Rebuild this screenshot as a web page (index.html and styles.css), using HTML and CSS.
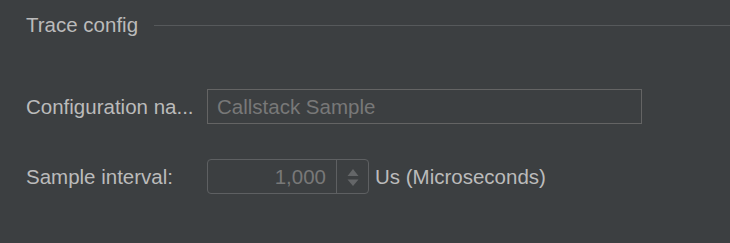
FILE: index.html
```html
<!DOCTYPE html>
<html>
<head>
<meta charset="utf-8">
<link rel="stylesheet" href="styles.css">
</head>
<body>
<div class="panel">
  <div class="title-row">
    <span class="title">Trace config</span>
    <div class="rule"></div>
  </div>
  <div class="form">
    <div class="row">
      <label class="label">Configuration na...</label>
      <div class="textfield">Callstack Sample</div>
    </div>
    <div class="row">
      <label class="label">Sample interval:</label>
      <div class="spinner">
        <div class="spin-value">1,000</div>
        <div class="spin-btns">
          <svg width="12" height="18" viewBox="0 0 12 18">
            <polygon points="6,0 11.5,7 0.5,7" fill="#646668"/>
            <polygon points="0.5,10.5 11.5,10.5 6,17" fill="#646668"/>
          </svg>
        </div>
      </div>
      <span class="unit">Us (Microseconds)</span>
    </div>
  </div>
</div>
</body>
</html>
```

FILE: styles.css
```css
html, body {
  margin: 0;
  padding: 0;
  background: #3c3f41;
}
body {
  width: 730px;
  height: 243px;
  overflow: hidden;
  font-family: "Liberation Sans", Arial, sans-serif;
  font-size: 20.5px;
  color: #bbbbbb;
}
.panel {
  padding: 13px 0 0 26px;
}
.title-row {
  display: flex;
  align-items: flex-start;
  height: 24px;
}
.title {
  line-height: 24px;
  white-space: nowrap;
}
.rule {
  flex: 1;
  height: 1px;
  margin-top: 12px;
  margin-left: 16px;
  background: #56595b;
}
.form {
  margin-top: 52px;
  display: flex;
  flex-direction: column;
  gap: 35px;
}
.row {
  display: flex;
  align-items: center;
  height: 35px;
}
.label {
  width: 181px;
  flex: none;
  white-space: nowrap;
  line-height: 33px;
}
.textfield {
  box-sizing: border-box;
  width: 435px;
  height: 35px;
  border: 1px solid #646464;
  padding-left: 9px;
  line-height: 33px;
  color: #787878;
  white-space: nowrap;
}
.spinner {
  box-sizing: border-box;
  width: 162px;
  height: 35px;
  border: 1px solid #5e6062;
  border-radius: 4px;
  display: flex;
}
.spin-value {
  flex: 1;
  text-align: right;
  padding-right: 10px;
  line-height: 33px;
  color: #787878;
  border-right: 1px solid #5e6062;
}
.spin-btns {
  width: 31px;
  display: flex;
  align-items: center;
  justify-content: center;
}
.spin-btns svg {
  display: block;
  margin-top: 2px;
}
.unit {
  margin-left: 6px;
  line-height: 33px;
  white-space: nowrap;
}
```
